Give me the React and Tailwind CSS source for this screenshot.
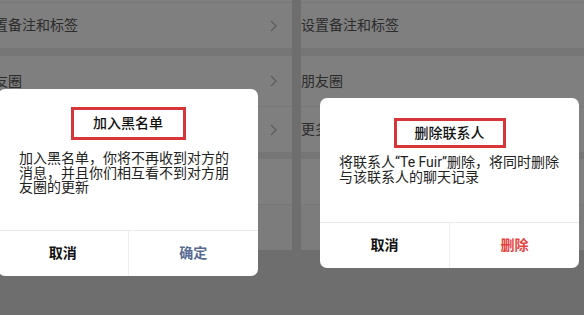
import React from 'react'

const font = { fontFamily: 'Roboto, "Noto Sans CJK SC", sans-serif' }

function Chevron() {
  return (
    <svg width="7" height="12" viewBox="0 0 7 12" fill="none" stroke="#5c5c5c" strokeWidth="1.3">
      <polyline points="1,1 6,6 1,11" />
    </svg>
  )
}

function Row({ label, chevron, className }) {
  return (
    <div className={`flex items-center justify-between pr-[15px] bg-[#7f7f7f] ${className}`}>
      <span className="text-[14px] text-[#2c2c2c]">{label}</span>
      {chevron && <Chevron />}
    </div>
  )
}

function Background({ chevron, textLeft }) {
  return (
    <div className="flex flex-col h-full bg-[#6e6e6e]" style={{ paddingLeft: textLeft }}>
      <div className="h-[3px] bg-[#7f7f7f] border-b border-[#777]" />
      <Row label="设置备注和标签" chevron={chevron} className="h-[45px]" />
      <div className="h-[8px] bg-[#767676]" />
      <Row label="朋友圈" chevron={chevron} className="h-[51px] border-b border-[#777]" />
      <Row label="更多" chevron={chevron} className="h-[45px]" />
      <div className="h-[7px] bg-[#767676]" />
      <div className="h-[46px] bg-[#7f7f7f] border-b border-[#777]" />
      <div className="h-[45px] bg-[#7c7c7c]" />
    </div>
  )
}

export default function App() {
  return (
    <div className="flex w-[584px] h-[315px] overflow-hidden bg-[#6e6e6e]" style={font}>
      {/* Left: blacklist dialog */}
      <div className="relative w-[292px] h-full overflow-hidden">
        <div className="absolute inset-0 left-[-20px]">
          <Background chevron />
        </div>
        <div className="absolute left-[-2px] top-[89px] w-[260px] h-[187px] bg-white rounded-[7px] flex flex-col pt-[18px]">
          <div className="mx-auto w-[115px] h-[33px] border-[3px] border-[#d8353a] flex items-center justify-center">
            <span className="text-[14px] font-medium text-[#111]">加入黑名单</span>
          </div>
          <div className="mt-[11px] pl-[21px] text-[14px] leading-[14.5px] text-[#222]">
            <div>加入黑名单，你将不再收到对方的</div>
            <div>消息，并且你们相互看不到对方朋</div>
            <div>友圈的更新</div>
          </div>
          <div className="mt-auto h-[46px] flex border-t border-[#eaeaea]">
            <div className="flex-1 flex items-center justify-center text-[14px] font-bold text-[#111] border-r border-[#eeeeee]">取消</div>
            <div className="flex-1 flex items-center justify-center text-[14px] font-bold text-[#576b95]">确定</div>
          </div>
        </div>
      </div>

      {/* Right: delete contact dialog */}
      <div className="relative w-[292px] h-full overflow-hidden">
        <div className="absolute inset-0 pl-[9px]">
          <Background />
        </div>
        <div className="absolute left-[28px] top-[98px] w-[259px] h-[170px] bg-white rounded-[7px] flex flex-col pt-[20px]">
          <div className="mx-auto w-[112px] h-[30px] border-[3px] border-[#d8353a] flex items-center justify-center">
            <span className="text-[14px] font-medium text-[#111]">删除联系人</span>
          </div>
          <div className="mt-[7px] pl-[19px] text-[14px] leading-[15px] text-[#222]">
            <div>将联系人“Te Fuir”删除，将同时删除</div>
            <div>与该联系人的聊天记录</div>
          </div>
          <div className="mt-auto h-[46px] flex border-t border-[#eaeaea]">
            <div className="flex-1 flex items-center justify-center text-[14px] font-bold text-[#111] border-r border-[#eeeeee]">取消</div>
            <div className="flex-1 flex items-center justify-center text-[14px] font-bold text-[#e64340]">删除</div>
          </div>
        </div>
      </div>
    </div>
  )
}
